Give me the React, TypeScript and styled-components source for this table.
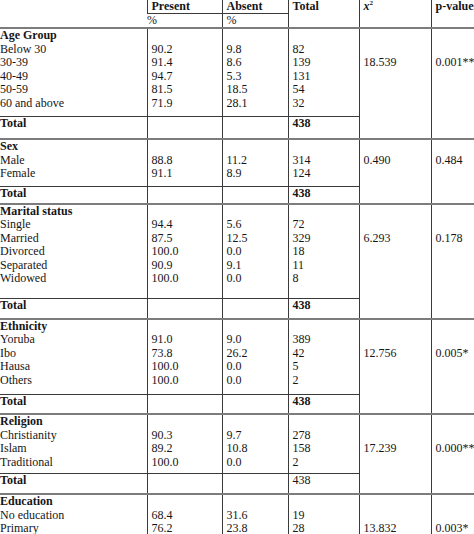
import React from "react";
import styled, { createGlobalStyle } from "styled-components";

const GlobalStyle = createGlobalStyle`
  body {
    margin: 0;
    background: #fff;
  }
`;

const Frame = styled.div`
  width: 474px;
  height: 534px;
  overflow: hidden;
  background: #fff;
`;

const Table = styled.table`
  border-collapse: collapse;
  table-layout: fixed;
  width: 520px;
  font-family: "Liberation Serif", "Times New Roman", serif;
  font-size: 12px;
  line-height: 13.5px;
  color: #161616;
`;

const Row = styled.tr<{ $sep?: boolean; $h?: number }>`
  height: ${(p) => (p.$h ? `${p.$h}px` : "auto")};
  border-bottom: ${(p) => (p.$sep ? "2px solid #7c7c7c" : "none")};
`;

const Cell = styled.td<{ $bold?: boolean; $rule?: boolean }>`
  padding: 0 0 0 4px;
  vertical-align: top;
  white-space: nowrap;
  overflow: hidden;
  font-weight: ${(p) => (p.$bold ? 700 : 400)};
  border-top: ${(p) => (p.$rule ? "1px solid #3a3a3a" : "none")};
  & + & {
    border-left: 1px solid #3a3a3a;
  }
  &:first-child {
    padding-left: 0;
  }
`;

const Head = styled(Cell).attrs({ as: "th" })<{ $under?: boolean }>`
  text-align: left;
  font-weight: 700;
  line-height: 12px;
  overflow: visible;
  border-left: 1px solid #3a3a3a;
  border-bottom: ${(p) => (p.$under ? "1px solid #3a3a3a" : "none")};
  &:first-child {
    border-left: none;
  }
`;

const Chi = styled.span`
  font-style: italic;
  font-weight: 700;
  sup {
    font-size: 7px;
    font-style: normal;
    vertical-align: 5px;
    line-height: 0;
  }
`;

type Group = {
  title: string;
  rows: string[][];
  chi: string;
  p: string;
  statRow: number;
  pad: number;
  totalH?: number;
  totalBold?: boolean;
};

const groups: Group[] = [
  {
    title: "Age Group",
    rows: [
      ["Below 30", "90.2", "9.8", "82"],
      ["30-39", "91.4", "8.6", "139"],
      ["40-49", "94.7", "5.3", "131"],
      ["50-59", "81.5", "18.5", "54"],
      ["60 and above", "71.9", "28.1", "32"],
    ],
    chi: "18.539",
    p: "0.001**",
    statRow: 1,
    pad: 6,
    totalH: 23,
    totalBold: true,
  },
  {
    title: "Sex",
    rows: [
      ["Male", "88.8", "11.2", "314"],
      ["Female", "91.1", "8.9", "124"],
    ],
    chi: "0.490",
    p: "0.484",
    statRow: 0,
    pad: 6,
    totalH: 17,
    totalBold: true,
  },
  {
    title: "Marital status",
    rows: [
      ["Single", "94.4", "5.6", "72"],
      ["Married", "87.5", "12.5", "329"],
      ["Divorced", "100.0", "0.0", "18"],
      ["Separated", "90.9", "9.1", "11"],
      ["Widowed", "100.0", "0.0", "8"],
    ],
    chi: "6.293",
    p: "0.178",
    statRow: 1,
    pad: 13,
    totalH: 20,
    totalBold: true,
  },
  {
    title: "Ethnicity",
    rows: [
      ["Yoruba", "91.0", "9.0", "389"],
      ["Ibo", "73.8", "26.2", "42"],
      ["Hausa", "100.0", "0.0", "5"],
      ["Others", "100.0", "0.0", "2"],
    ],
    chi: "12.756",
    p: "0.005*",
    statRow: 1,
    pad: 7,
    totalH: 20,
    totalBold: true,
  },
  {
    title: "Religion",
    rows: [
      ["Christianity", "90.3", "9.7", "278"],
      ["Islam", "89.2", "10.8", "158"],
      ["Traditional", "100.0", "0.0", "2"],
    ],
    chi: "17.239",
    p: "0.000**",
    statRow: 1,
    pad: 4,
    totalH: 21,
    totalBold: false,
  },
  {
    title: "Education",
    rows: [
      ["No education", "68.4", "31.6", "19"],
      ["Primary", "76.2", "23.8", "28"],
    ],
    chi: "13.832",
    p: "0.003*",
    statRow: 1,
    pad: 0,
  },
];

function GroupRows({ g }: { g: Group }) {
  return (
    <>
      <Row>
        <Cell $bold>{g.title}</Cell>
        <Cell />
        <Cell />
        <Cell />
        <Cell />
        <Cell />
      </Row>
      {g.rows.map((r, i) => (
        <Row key={r[0]}>
          {r.map((v, j) => (
            <Cell key={j}>{v}</Cell>
          ))}
          <Cell>{i === g.statRow ? g.chi : ""}</Cell>
          <Cell>{i === g.statRow ? g.p : ""}</Cell>
        </Row>
      ))}
      {g.totalH && (
        <>
          <Row $h={g.pad}>
            <Cell />
            <Cell />
            <Cell />
            <Cell />
            <Cell />
            <Cell />
          </Row>
          <Row $h={g.totalH} $sep>
            <Cell $bold $rule>
              Total
            </Cell>
            <Cell $rule />
            <Cell $rule />
            <Cell $rule $bold={g.totalBold}>
              438
            </Cell>
            <Cell />
            <Cell />
          </Row>
        </>
      )}
    </>
  );
}

export default function App() {
  return (
    <Frame>
      <GlobalStyle />
      <Table>
        <colgroup>
          <col style={{ width: 147 }} />
          <col style={{ width: 75 }} />
          <col style={{ width: 66 }} />
          <col style={{ width: 71 }} />
          <col style={{ width: 72 }} />
          <col style={{ width: 89 }} />
        </colgroup>
        <thead>
          <Row $h={13}>
            <Head rowSpan={2} />
            <Head $under>Present</Head>
            <Head $under>Absent</Head>
            <Head rowSpan={2}>Total</Head>
            <Head rowSpan={2}>
              <Chi>
                x<sup>2</sup>
              </Chi>
            </Head>
            <Head rowSpan={2}>p-values</Head>
          </Row>
          <Row $h={14} $sep>
            <Cell>%</Cell>
            <Cell>%</Cell>
          </Row>
        </thead>
        <tbody>
          {groups.map((g) => (
            <GroupRows key={g.title} g={g} />
          ))}
        </tbody>
      </Table>
    </Frame>
  );
}
